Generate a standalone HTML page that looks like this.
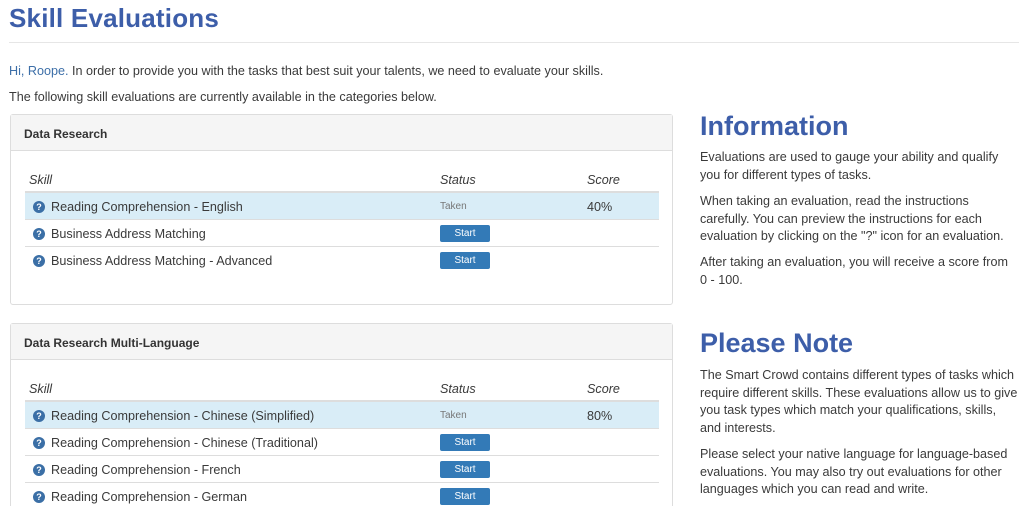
<!DOCTYPE html>
<html><head><style>
*{margin:0;padding:0;box-sizing:border-box}
html,body{width:1024px;height:506px;overflow:hidden}
body{background:#fff;font-family:"Liberation Sans",sans-serif;font-size:12.6px;color:#3a3a3a;position:relative}
.a{position:absolute;white-space:nowrap}
h1{position:absolute;left:9px;top:3px;font-size:26px;color:#3d5ea9;font-weight:bold;letter-spacing:0.2px}
.hr{position:absolute;left:9px;top:42px;width:1010px;height:1px;background:#e6e6e6}
.panel{position:absolute;left:10px;width:663px;border:1px solid #ddd;border-radius:3px}
.ph{height:36px;background:#f5f5f5;border-bottom:1px solid #ddd;font-weight:bold;font-size:12px;padding:12px 0 0 13px;color:#333}
.tbl{position:absolute;left:14px;width:634px}
.th{height:27px;border-bottom:2px solid #ddd;font-style:italic;position:relative}
.tr{height:27px;border-bottom:1px solid #ddd;position:relative}
.tr.hl{background:#d9edf7}
.c1{position:absolute;left:8px;top:7px;display:flex;align-items:center}
.c2{position:absolute;left:415px;top:7px}
.c3{position:absolute;left:562px;top:7px}
.q{display:inline-block;width:12px;height:12px;border-radius:50%;background:#3b6fa6;color:#fff;font-size:9px;font-weight:bold;text-align:center;line-height:12px;margin-right:6px;font-style:normal}
.btn{position:absolute;left:415px;top:5px;width:50px;height:17px;background:#337ab7;border-radius:2px;color:#fff;font-size:10px;text-align:center;line-height:17px}
.tk{font-size:10px;color:#777;top:8px}
h2{position:absolute;left:700px;font-size:27px;color:#3d5ea9;font-weight:bold}
.p{position:absolute;left:700px;width:312px;line-height:17.5px;font-size:12.6px}
</style></head><body>
<h1>Skill Evaluations</h1>
<div class="hr"></div>
<div class="a" style="left:9px;top:64px"><span style="color:#3d6fa8">Hi, Roope.</span> In order to provide you with the tasks that best suit your talents, we need to evaluate your skills.</div>
<div class="a" style="left:9px;top:90px">The following skill evaluations are currently available in the categories below.</div>

<div class="panel" style="top:114px;height:191px">
<div class="ph">Data Research</div>
<div class="tbl" style="top:51px">
<div class="th"><span class="c1" style="left:4px">Skill</span><span class="c2">Status</span><span class="c3">Score</span></div>
<div class="tr hl"><span class="c1"><span class="q">?</span>Reading Comprehension - English</span><span class="c2 tk">Taken</span><span class="c3">40%</span></div>
<div class="tr"><span class="c1"><span class="q">?</span>Business Address Matching</span><span class="btn">Start</span></div>
<div class="tr" style="border-bottom:none"><span class="c1"><span class="q">?</span>Business Address Matching - Advanced</span><span class="btn">Start</span></div>
</div>
</div>

<div class="panel" style="top:323px;height:200px">
<div class="ph">Data Research Multi-Language</div>
<div class="tbl" style="top:51px">
<div class="th"><span class="c1" style="left:4px">Skill</span><span class="c2">Status</span><span class="c3">Score</span></div>
<div class="tr hl"><span class="c1"><span class="q">?</span>Reading Comprehension - Chinese (Simplified)</span><span class="c2 tk">Taken</span><span class="c3">80%</span></div>
<div class="tr"><span class="c1"><span class="q">?</span>Reading Comprehension - Chinese (Traditional)</span><span class="btn">Start</span></div>
<div class="tr"><span class="c1"><span class="q">?</span>Reading Comprehension - French</span><span class="btn">Start</span></div>
<div class="tr"><span class="c1"><span class="q">?</span>Reading Comprehension - German</span><span class="btn">Start</span></div>
</div>
</div>

<h2 style="top:111px">Information</h2>
<div class="p" style="top:149px">Evaluations are used to gauge your ability and qualify you for different types of tasks.</div>
<div class="p" style="top:193px">When taking an evaluation, read the instructions carefully. You can preview the instructions for each evaluation by clicking on the "?" icon for an evaluation.</div>
<div class="p" style="top:254px">After taking an evaluation, you will receive a score from 0 - 100.</div>
<h2 style="top:328px">Please Note</h2>
<div class="p" style="top:367px;width:320px">The Smart Crowd contains different types of tasks which require different skills. These evaluations allow us to give you task types which match your qualifications, skills, and interests.</div>
<div class="p" style="top:446px">Please select your native language for language-based evaluations. You may also try out evaluations for other languages which you can read and write.</div>
</body></html>
